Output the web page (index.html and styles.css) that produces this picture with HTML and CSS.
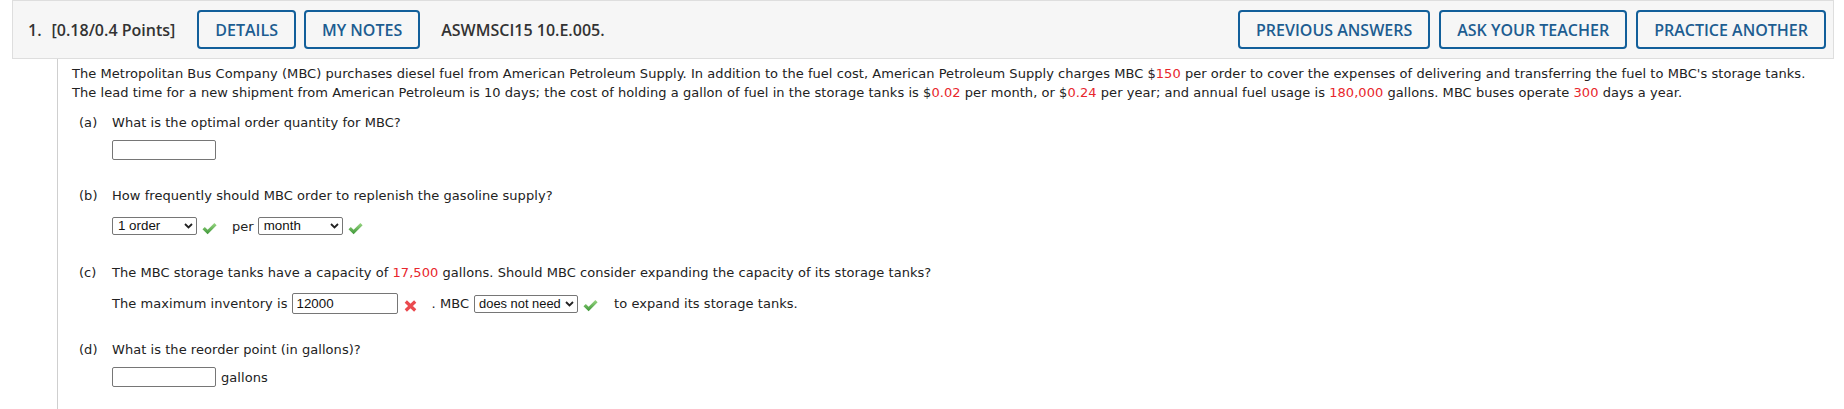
FILE: index.html
```html
<!DOCTYPE html>
<html lang="en">
<head>
<meta charset="utf-8">
<title>Question 1</title>
<link rel="stylesheet" href="styles.css">
</head>
<body>
<header class="qhead">
  <div class="qhead-left">
    <span class="qnum">1.</span>
    <span class="qpts">[0.18/0.4 Points]</span>
    <button class="btn">DETAILS</button>
    <button class="btn btn-notes">MY NOTES</button>
    <span class="qid">ASWMSCI15 10.E.005.</span>
  </div>
  <div class="qhead-right">
    <button class="btn">PREVIOUS ANSWERS</button>
    <button class="btn">ASK YOUR TEACHER</button>
    <button class="btn">PRACTICE ANOTHER</button>
  </div>
</header>
<main class="qbody">
  <p class="intro">
    <span class="ln">The Metropolitan Bus Company (MBC) purchases diesel fuel from American Petroleum Supply. In addition to the fuel cost, American Petroleum Supply charges MBC $<span class="red">150</span> per order to cover the expenses of delivering and transferring the fuel to MBC's storage tanks.</span>
    <span class="ln">The lead time for a new shipment from American Petroleum is 10 days; the cost of holding a gallon of fuel in the storage tanks is $<span class="red">0.02</span> per month, or $<span class="red">0.24</span> per year; and annual fuel usage is <span class="red">180,000</span> gallons. MBC buses operate <span class="red">300</span> days a year.</span>
  </p>

  <div class="part pa">
    <span class="plabel">(a)</span>
    <span class="ptext">What is the optimal order quantity for MBC?</span>
    <div class="prow">
      <input class="ans w104" type="text" value="">
    </div>
  </div>

  <div class="part pb">
    <span class="plabel">(b)</span>
    <span class="ptext">How frequently should MBC order to replenish the gasoline supply?</span>
    <div class="prow">
      <span class="selwrap w85">
        <select class="sel"><option>1 order</option></select>
        <svg class="chev" width="9" height="6" viewBox="0 0 9 6"><path d="M1 1 L4.5 4.5 L8 1" fill="none" stroke="#222" stroke-width="1.8"/></svg>
      </span>
      <svg class="mark chk" width="15" height="13" viewBox="0 0 16 13"><defs><linearGradient id="g1" x1="0" y1="0" x2="0" y2="1"><stop offset="0" stop-color="#9ad784"/><stop offset="1" stop-color="#3c9636"/></linearGradient></defs><path d="M0.5 7.2 L3 4.8 L6 7.8 L13.2 0.6 L15.6 3 L6 12.6 Z" fill="url(#g1)"/></svg>
      <span class="txt after-mark">per</span>
      <span class="selwrap w85 gap4">
        <select class="sel"><option>month</option></select>
        <svg class="chev" width="9" height="6" viewBox="0 0 9 6"><path d="M1 1 L4.5 4.5 L8 1" fill="none" stroke="#222" stroke-width="1.8"/></svg>
      </span>
      <svg class="mark chk" width="15" height="13" viewBox="0 0 16 13"><defs><linearGradient id="g2" x1="0" y1="0" x2="0" y2="1"><stop offset="0" stop-color="#9ad784"/><stop offset="1" stop-color="#3c9636"/></linearGradient></defs><path d="M0.5 7.2 L3 4.8 L6 7.8 L13.2 0.6 L15.6 3 L6 12.6 Z" fill="url(#g2)"/></svg>
    </div>
  </div>

  <div class="part pc">
    <span class="plabel">(c)</span>
    <span class="ptext">The MBC storage tanks have a capacity of <span class="red">17,500</span> gallons. Should MBC consider expanding the capacity of its storage tanks?</span>
    <div class="prow">
      <span class="txt">The maximum inventory is</span>
      <input class="ans w106 tall gap4" type="text" value="12000">
      <svg class="mark xmark" width="13" height="12" viewBox="0 0 13 12"><path d="M1.8 1.5 L11.2 10.5 M11.2 1.5 L1.8 10.5" stroke="#ea4a4f" stroke-width="3.2"/></svg>
      <span class="txt after-mark">. MBC</span>
      <span class="selwrap w104 gap5">
        <select class="sel sel-tight"><option>does not need</option></select>
        <svg class="chev" width="9" height="6" viewBox="0 0 9 6"><path d="M1 1 L4.5 4.5 L8 1" fill="none" stroke="#222" stroke-width="1.8"/></svg>
      </span>
      <svg class="mark chk" width="15" height="13" viewBox="0 0 16 13"><defs><linearGradient id="g3" x1="0" y1="0" x2="0" y2="1"><stop offset="0" stop-color="#9ad784"/><stop offset="1" stop-color="#3c9636"/></linearGradient></defs><path d="M0.5 7.2 L3 4.8 L6 7.8 L13.2 0.6 L15.6 3 L6 12.6 Z" fill="url(#g3)"/></svg>
      <span class="txt after-mark2">to expand its storage tanks.</span>
    </div>
  </div>

  <div class="part pd">
    <span class="plabel">(d)</span>
    <span class="ptext">What is the reorder point (in gallons)?</span>
    <div class="prow">
      <input class="ans w104" type="text" value="">
      <span class="txt gap5">gallons</span>
    </div>
  </div>
</main>
</body>
</html>
```

FILE: styles.css
```css
* { box-sizing: border-box; }

html, body {
  margin: 0;
  padding: 0;
  background: #ffffff;
}

body {
  width: 1844px;
  height: 409px;
  overflow: hidden;
  font-family: "DejaVu Sans", Verdana, sans-serif;
  font-size: 13px;
  color: #222222;
}

/* ---------- header ---------- */
.qhead {
  display: flex;
  align-items: center;
  justify-content: space-between;
  height: 59px;
  margin: 0 10px 0 12px;
  padding: 0 7px 0 15px;
  background: #f6f6f6;
  border: 1px solid #dedede;
  font-family: "Open Sans", sans-serif;
  font-weight: 600;
  font-size: 16px;
  color: #333333;
}

.qhead-left,
.qhead-right {
  display: flex;
  align-items: center;
}

.qhead-right { gap: 9px; }

.qnum { margin-right: 10px; }
.qpts { margin-right: 22px; }
.btn-notes { margin-left: 8px; }
.qid { margin-left: 21px; }

.btn {
  height: 39px;
  padding: 0 16px;
  border: 2px solid #125f9a;
  border-radius: 4px;
  background: transparent;
  color: #1d5d91;
  font-family: "Open Sans", sans-serif;
  font-weight: 600;
  font-size: 16px;
  line-height: 1;
  white-space: nowrap;
}

/* ---------- body ---------- */
.qbody {
  margin-left: 57px;
  height: 350px;
  padding: 5px 0 0 14px;
  border-left: 1px solid #cfcfcf;
  letter-spacing: 0.05px;
}

.intro {
  margin: 0;
  line-height: 19px;
}

.ln {
  display: block;
  white-space: nowrap;
}

.red { color: #e8262c; }

.part {
  display: grid;
  grid-template-columns: 33px auto;
  margin-left: 7px;
  line-height: 19px;
}

.plabel { grid-column: 1; }
.ptext { grid-column: 2; white-space: nowrap; }

.prow {
  grid-column: 2;
  display: flex;
  align-items: center;
  white-space: nowrap;
}

.pa { margin-top: 11px; }
.pa .prow { margin-top: 8px; height: 20px; }

.pb { margin-top: 26px; }
.pb .prow { margin-top: 11px; height: 20px; }

.pc { margin-top: 27px; }
.pc .prow { margin-top: 11px; height: 21px; }

.pd { margin-top: 26px; }
.pd .prow { margin-top: 8px; height: 20px; }

/* ---------- form controls ---------- */
.ans {
  height: 20px;
  padding: 1px 4px;
  border: 1px solid #767676;
  border-radius: 2px;
  background: #ffffff;
  font-family: "Liberation Sans", Arial, sans-serif;
  font-size: 13.33px;
  letter-spacing: 0;
  color: #111111;
}

.ans.tall { height: 21px; }

.selwrap {
  position: relative;
  display: inline-flex;
  flex: none;
  height: 18px;
}

.sel {
  -webkit-appearance: none;
  appearance: none;
  width: 100%;
  height: 18px;
  margin: 0;
  padding: 0 14px 0 5px;
  border: 1px solid #767676;
  border-radius: 2px;
  background: #ffffff;
  font-family: "Liberation Sans", Arial, sans-serif;
  font-size: 13.33px;
  letter-spacing: 0;
  line-height: 16px;
  color: #111111;
}

.sel-tight {
  padding-left: 4px;
  padding-right: 10px;
  font-size: 12.9px;
}

.chev {
  position: absolute;
  right: 4px;
  top: 6px;
  pointer-events: none;
}

.w85 { width: 85px; }
.w104 { width: 104px; }
.w106 { width: 106px; }

.gap4 { margin-left: 4px; }
.gap5 { margin-left: 5px; }

.mark {
  flex: none;
  align-self: flex-end;
  margin-bottom: 1px;
}

.chk { margin-left: 5px; }
.xmark { margin-left: 6px; }
.pc .mark { margin-bottom: 2px; }

.after-mark { margin-left: 15px; }
.after-mark2 { margin-left: 16px; }
```
